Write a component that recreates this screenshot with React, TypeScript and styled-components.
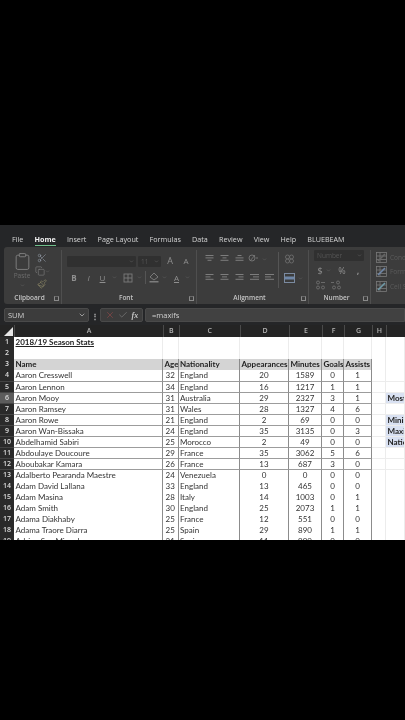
import React from "react";
import styled, { createGlobalStyle } from "styled-components";
import { ChevronDown, Check, X, Scissors, Copy, Paintbrush, Clipboard } from "lucide-react";

const GlobalStyle = createGlobalStyle`
	html, body { margin: 0; padding: 0; background: #000; }
	* { box-sizing: border-box; }
`;

const COLUMNS = "14px 149px 15.5px 61.5px 49px 33px 22px 28px 14px 1fr";
const ROW_HEIGHT = 11.07;
const UI_FONT = `"Open Sans", "Noto Sans", sans-serif`;
const CELL_FONT = `Lato, "Open Sans", sans-serif`;

const players: [string, number, string, number, number, number, number][] = [
	["Aaron Cresswell", 32, "England", 20, 1589, 0, 1],
	["Aaron Lennon", 34, "England", 16, 1217, 1, 1],
	["Aaron Mooy", 31, "Australia", 29, 2327, 3, 1],
	["Aaron Ramsey", 31, "Wales", 28, 1327, 4, 6],
	["Aaron Rowe", 21, "England", 2, 69, 0, 0],
	["Aaron Wan-Bissaka", 24, "England", 35, 3135, 0, 3],
	["Abdelhamid Sabiri", 25, "Morocco", 2, 49, 0, 0],
	["Abdoulaye Doucoure", 29, "France", 35, 3062, 5, 6],
	["Aboubakar Kamara", 26, "France", 13, 687, 3, 0],
	["Adalberto Pearanda Maestre", 24, "Venezuela", 0, 0, 0, 0],
	["Adam David Lallana", 33, "England", 13, 465, 0, 0],
	["Adam Masina", 28, "Italy", 14, 1003, 0, 1],
	["Adam Smith", 30, "England", 25, 2073, 1, 1],
	["Adama Diakhaby", 25, "France", 12, 551, 0, 0],
	["Adama Traore Diarra", 25, "Spain", 29, 890, 1, 1],
	["Adrian San Miguel", 31, "Spain", 11, 990, 0, 0],
];

const sideLabels: Record<number, string> = {
	6: "Most Goals",
	8: "Minimum",
	9: "Maximum",
	10: "Nationality",
};

const menuItems = ["File", "Home", "Insert", "Page Layout", "Formulas", "Data", "Review", "View", "Help", "BLUEBEAM"];

const Page = styled.div`
	width: 405px;
	height: 720px;
	background: #000;
	padding-top: 225px;
	overflow: hidden;
`;

const Excel = styled.div`
	height: 315px;
	background: #252628;
	overflow: hidden;
	filter: blur(0.4px);
	display: flex;
	flex-direction: column;
`;

const MenuBar = styled.nav`
	height: 22px;
	flex: none;
	display: flex;
	align-items: center;
	gap: 11.2px;
	padding: 5px 0 0 12px;
	font: 7.2px ${UI_FONT};
	color: #d8d8d8;
`;

const MenuItem = styled.span<{ $active?: boolean }>`
	position: relative;
	font-weight: ${(p) => (p.$active ? 700 : 400)};
	color: ${(p) => (p.$active ? "#f2f2f2" : "#d4d4d4")};
	&::after {
		content: "";
		display: ${(p) => (p.$active ? "block" : "none")};
		position: absolute;
		left: 0;
		right: 0;
		bottom: -2px;
		height: 1px;
		background: #6fbf8a;
	}
`;

const Ribbon = styled.div`
	height: 57px;
	flex: none;
	margin-left: 4px;
	background: #3c3c3c;
	border-radius: 3px 0 0 3px;
	display: flex;
	overflow: hidden;
`;

const Group = styled.section<{ $width: number; $last?: boolean }>`
	width: ${(p) => p.$width}px;
	flex: none;
	position: relative;
	display: flex;
	flex-direction: column;
	border-right: 1px solid ${(p) => (p.$last ? "transparent" : "#4f4f4f")};
	margin-top: 3px;
	padding: 0 3px 0 5px;
`;

const GroupBody = styled.div`
	flex: 1;
	display: flex;
	min-height: 0;
`;

const GroupLabel = styled.div`
	height: 11px;
	flex: none;
	padding-right: 8px;
	text-align: center;
	font: 600 6.5px/10px ${UI_FONT};
	color: #c4c4c4;
`;

const Launcher = styled.span`
	position: absolute;
	right: 2px;
	bottom: 3px;
	width: 5px;
	height: 5px;
	border: 1px solid #8a8a8a;
	border-top-color: #666;
`;

const Stack = styled.div<{ $width?: number; $gap?: number; $top?: number; $start?: boolean }>`
	display: flex;
	flex-direction: column;
	align-items: ${(p) => (p.$start ? "flex-start" : "center")};
	gap: ${(p) => p.$gap ?? 0}px;
	padding-top: ${(p) => p.$top ?? 0}px;
	${(p) => (p.$width ? `width: ${p.$width}px; flex: none;` : "")}
`;

const Row = styled.div<{ $gap?: number }>`
	display: flex;
	align-items: center;
	gap: ${(p) => p.$gap ?? 0}px;
`;

const Spaced = styled.span<{ $left: number }>`
	display: inline-flex;
	align-items: center;
	flex: none;
	margin-left: ${(p) => p.$left}px;
`;

const PasteLabel = styled.span`
	font: 6.5px/8px ${UI_FONT};
	color: #6c6c6c;
	margin: 1px 0 3px;
`;

const Combo = styled.div<{ $width: number }>`
	width: ${(p) => p.$width}px;
	height: 11px;
	flex: none;
	background: #303030;
	border-radius: 1px;
	display: flex;
	align-items: center;
	justify-content: space-between;
	padding: 0 2px 0 3px;
	font: 6.5px ${UI_FONT};
	color: #555;
`;

const Glyph = styled.span<{ $width?: number; $bold?: boolean; $italic?: boolean; $under?: boolean; $size?: number }>`
	display: inline-block;
	width: ${(p) => p.$width ?? 14}px;
	text-align: center;
	flex: none;
	font: ${(p) => (p.$italic ? "italic " : "")}${(p) => (p.$bold ? 700 : 400)} ${(p) => p.$size ?? 8}px/12px ${UI_FONT};
	color: #8f8f8f;
	text-decoration: ${(p) => (p.$under ? "underline" : "none")};
`;

const Caret = styled(ChevronDown).attrs({ size: 5, strokeWidth: 2.5 })`
	color: #666;
	flex: none;
`;

const RuleDivider = styled.span<{ $tall?: boolean }>`
	width: 1px;
	height: ${(p) => (p.$tall ? 36 : 13)}px;
	background: #555;
	flex: none;
`;

const StyleRow = styled.div`
	display: flex;
	align-items: center;
	gap: 3px;
	height: 14.5px;
	font: 6.5px ${UI_FONT};
	color: #5b5b5b;
	white-space: nowrap;
`;

const AlignIcon: React.FC<{ lines: [number, number][] }> = ({ lines }) => (
	<svg width="15" height="10" viewBox="0 0 15 10">
		{lines.map(([x1, x2], i) => (
			<line key={i} x1={x1} x2={x2} y1={1.5 + i * 2.4} y2={1.5 + i * 2.4} stroke="#858585" strokeWidth="0.9" />
		))}
	</svg>
);

const OrientIcon = () => (
	<svg width="15" height="10" viewBox="0 0 15 10" fill="none" stroke="#777" strokeWidth="0.9">
		<circle cx="5" cy="4" r="3" />
		<path d="M3 7 L8 1 M9 4 h2" />
	</svg>
);

const WrapIcon = () => (
	<svg width="11" height="10" viewBox="0 0 11 10" fill="none" stroke="#6d6d6d" strokeWidth="0.9">
		<circle cx="3.5" cy="3" r="2" />
		<circle cx="7.5" cy="3" r="2" />
		<circle cx="3.5" cy="7" r="2" />
		<circle cx="7.5" cy="7" r="2" />
	</svg>
);

const MergeIcon = () => (
	<svg width="11" height="10" viewBox="0 0 11 10" fill="none">
		<rect x="0.5" y="0.5" width="10" height="9" stroke="#7a8aa0" />
		<rect x="1" y="3.5" width="9" height="3" fill="#6f87a8" />
	</svg>
);

const BorderIcon = () => (
	<svg width="10" height="10" viewBox="0 0 10 10" fill="none" stroke="#7a7a7a" strokeWidth="0.9">
		<rect x="1" y="1" width="8" height="8" />
		<path d="M5 1v8M1 5h8" />
	</svg>
);

const FillIcon = () => (
	<svg width="10" height="11" viewBox="0 0 10 11" fill="none" stroke="#808080" strokeWidth="0.9">
		<path d="M5 1 L9 5 L5 8 L1 5 Z" />
		<rect x="0.5" y="9" width="9" height="1.5" fill="#7d7d7d" stroke="none" />
	</svg>
);

const DecimalIcon: React.FC<{ flip?: boolean }> = ({ flip }) => (
	<svg width="12" height="10" viewBox="0 0 12 10" fill="none" stroke="#6f6f6f" strokeWidth="0.9">
		<circle cx={flip ? 8 : 4} cy="2.5" r="1.5" />
		<circle cx="4" cy="7.5" r="1.5" />
		<circle cx="9" cy="7.5" r="1.5" />
		<path d={flip ? "M1 2.5h3" : "M7 2.5h4"} />
	</svg>
);

const TableStyleIcon: React.FC<{ tint: string }> = ({ tint }) => (
	<svg width="11" height="11" viewBox="0 0 11 11" fill="none" stroke="#7a7a7a" strokeWidth="0.8">
		<rect x="0.5" y="0.5" width="10" height="10" />
		<path d="M0.5 4h10M0.5 7.5h10M4 0.5v10" />
		<path d="M2 9 L9 2" stroke={tint} strokeWidth="1.6" />
	</svg>
);

const FormulaBar = styled.div`
	height: 14px;
	flex: none;
	margin-top: 4px;
	display: flex;
	align-items: stretch;
	padding-left: 4px;
	font: 7.5px ${UI_FONT};
	color: #d0d0d0;
`;

const NameBox = styled.div`
	width: 85px;
	flex: none;
	background: #3c3c3c;
	border: 1px solid #4a4a4a;
	border-radius: 2px;
	display: flex;
	align-items: center;
	justify-content: space-between;
	padding: 0 2px 0 3px;
`;

const Dots = styled.span`
	width: 11px;
	flex: none;
	display: flex;
	align-items: center;
	justify-content: center;
	color: #bbb;
	font: 700 8px ${UI_FONT};
`;

const FormulaButtons = styled.div`
	width: 43px;
	flex: none;
	background: #3c3c3c;
	border: 1px solid #4a4a4a;
	border-radius: 2px;
	display: flex;
	align-items: center;
	justify-content: space-around;
	padding: 0 2px;
`;

const FxLabel = styled.span`
	font: italic 700 8px "Liberation Serif", serif;
	color: #c4c4c4;
`;

const FormulaInput = styled.div`
	flex: 1;
	margin-left: 2px;
	background: #414141;
	border: 1px solid #4a4a4a;
	border-radius: 2px 0 0 2px;
	padding-left: 6px;
	line-height: 12px;
	font-size: 7.5px;
`;

const Sheet = styled.div`
	margin-top: 3px;
	flex: 1;
	min-height: 0;
	background: #fff;
	overflow: hidden;
`;

const ColumnHeader = styled.div`
	height: 12.3px;
	display: grid;
	grid-template-columns: ${COLUMNS};
	background: #242424;
`;

const ColumnLetter = styled.div`
	text-align: center;
	font: 600 7px/12px ${UI_FONT};
	color: #b4b4b4;
	border-left: 1px solid #4a4a4a;
`;

const SelectAll = styled.div`
	position: relative;
	&::after {
		content: "";
		position: absolute;
		right: 1px;
		bottom: 1px;
		border-style: solid;
		border-width: 0 0 9px 9px;
		border-color: transparent transparent #e6e6e6 transparent;
	}
`;

const SheetRow = styled.div`
	height: ${ROW_HEIGHT}px;
	display: grid;
	grid-template-columns: ${COLUMNS};
`;

const RowNumber = styled.div<{ $active?: boolean }>`
	background: ${(p) => (p.$active ? "#5c5c5c" : "#2a2a2a")};
	color: #dedede;
	text-align: center;
	font: 600 7px/10.5px ${UI_FONT};
	border-bottom: 1px solid #444;
`;

const Cell = styled.div<{ $align?: string; $head?: boolean; $table?: boolean; $fill?: boolean; $title?: boolean }>`
	min-width: 0;
	white-space: nowrap;
	overflow: ${(p) => (p.$title ? "visible" : "hidden")};
	padding: 0 1.5px;
	text-align: ${(p) => p.$align ?? "left"};
	font: ${(p) => (p.$head || p.$fill || p.$title ? 700 : 400)} 8px/10.6px ${CELL_FONT};
	color: ${(p) => (p.$head || p.$fill || p.$title ? "#222" : "#333")};
	text-decoration: ${(p) => (p.$title ? "underline" : "none")};
	background: ${(p) => (p.$head ? "#d4d4d4" : p.$fill ? "#d9e1f2" : "#fff")};
	border-bottom: 1px solid ${(p) => (p.$table ? "#9c9c9c" : "#ececec")};
	border-right: 1px solid ${(p) => (p.$table ? "#8c8c8c" : "#ececec")};
`;

const Ribbonbar = () => (
	<Ribbon>
		<Group $width={58}>
			<GroupBody>
				<Stack $width={26} $top={2}>
					<Clipboard size={19} strokeWidth={1.2} color="#808080" />
					<PasteLabel>Paste</PasteLabel>
					<Caret />
				</Stack>
				<Stack $width={14} $gap={3} $top={3}>
					<Scissors size={10} strokeWidth={1.3} color="#9aa3b0" />
					<Row>
						<Copy size={10} strokeWidth={1.3} color="#8a8a8a" />
						<Caret />
					</Row>
					<Paintbrush size={10} strokeWidth={1.3} color="#9a9570" />
				</Stack>
			</GroupBody>
			<GroupLabel>Clipboard</GroupLabel>
			<Launcher />
		</Group>
		<Group $width={135}>
			<GroupBody>
				<Stack $gap={4} $top={5} $start>
					<Row $gap={2}>
						<Combo $width={69}>
							<span />
							<Caret />
						</Combo>
						<Combo $width={23}>
							<span>11</span>
							<Caret />
						</Combo>
						<Glyph $size={9}>A</Glyph>
						<Glyph $size={8}>A</Glyph>
					</Row>
					<Row>
						<Glyph $bold $width={14}>B</Glyph>
						<Glyph $italic $width={15}>I</Glyph>
						<Glyph $under $width={13}>U</Glyph>
						<Spaced $left={3}><Caret /></Spaced>
						<Spaced $left={6}><BorderIcon /></Spaced>
						<Spaced $left={4}><Caret /></Spaced>
						<Spaced $left={3}><RuleDivider /></Spaced>
						<Spaced $left={3}><FillIcon /></Spaced>
						<Spaced $left={3}><Caret /></Spaced>
						<Glyph $under $width={17} style={{ marginLeft: 1 }}>A</Glyph>
						<Caret />
					</Row>
				</Stack>
			</GroupBody>
			<GroupLabel>Font</GroupLabel>
			<Launcher />
		</Group>
		<Group $width={112}>
			<GroupBody>
				<Stack $gap={7.5} $top={2.5} $start>
					<Row style={{ height: 13 }}>
						<AlignIcon lines={[[3.5, 11.5], [3.5, 11.5], [5.5, 9.5]]} />
						<AlignIcon lines={[[3.5, 11.5], [5.5, 9.5], [3.5, 11.5]]} />
						<AlignIcon lines={[[5.5, 9.5], [3.5, 11.5], [3.5, 11.5]]} />
						<OrientIcon />
						<Caret />
					</Row>
					<Row>
						<AlignIcon lines={[[3.5, 11.5], [3.5, 8.5], [3.5, 11.5]]} />
						<AlignIcon lines={[[3.5, 11.5], [5, 10], [3.5, 11.5]]} />
						<AlignIcon lines={[[3.5, 11.5], [6.5, 11.5], [3.5, 11.5]]} />
						<AlignIcon lines={[[3, 12], [6, 12], [3, 12]]} />
						<AlignIcon lines={[[3, 12], [3, 9], [3, 12]]} />
					</Row>
				</Stack>
				<Spaced $left={1} style={{ alignSelf: "flex-start", marginTop: 2 }}><RuleDivider $tall /></Spaced>
				<Stack $gap={7.5} $top={4} $start style={{ marginLeft: 5 }}>
					<Row style={{ height: 10 }}><WrapIcon /></Row>
					<Row $gap={3} style={{ height: 10, marginTop: 1.5 }}>
						<MergeIcon />
						<Caret />
					</Row>
				</Stack>
			</GroupBody>
			<GroupLabel>Alignment</GroupLabel>
			<Launcher />
		</Group>
		<Group $width={62}>
			<GroupBody>
				<Stack $gap={3.5} $start>
					<Combo $width={50}>
						<span>Number</span>
						<Caret />
					</Combo>
					<Row>
						<Glyph $size={9} $width={12}>$</Glyph>
						<Caret />
						<Glyph $size={9} $width={18} style={{ marginLeft: 2 }}>%</Glyph>
						<Glyph $bold $size={9} $width={14}>,</Glyph>
					</Row>
					<Row $gap={4}>
						<DecimalIcon />
						<DecimalIcon flip />
					</Row>
				</Stack>
			</GroupBody>
			<GroupLabel>Number</GroupLabel>
			<Launcher />
		</Group>
		<Group $width={80} $last>
			<GroupBody>
				<Stack $start>
					<StyleRow><TableStyleIcon tint="#666" />Conditional</StyleRow>
					<StyleRow><TableStyleIcon tint="#6f87a8" />Format as</StyleRow>
					<StyleRow><TableStyleIcon tint="#6f9aa8" />Cell Styles</StyleRow>
				</Stack>
			</GroupBody>
		</Group>
	</Ribbon>
);

const SideCell: React.FC<{ row: number }> = ({ row }) =>
	sideLabels[row] ? <Cell $fill>{sideLabels[row]}</Cell> : <Cell />;

export default function App() {
	return (
		<Page>
			<GlobalStyle />
			<Excel>
				<MenuBar>
					{menuItems.map((item) => (
						<MenuItem key={item} $active={item === "Home"}>
							{item}
						</MenuItem>
					))}
				</MenuBar>
				<Ribbonbar />
				<FormulaBar>
					<NameBox>
						SUM
						<ChevronDown size={8} color="#c8c8c8" />
					</NameBox>
					<Dots>⋮</Dots>
					<FormulaButtons>
						<X size={10} strokeWidth={1.3} color="#a04a4a" />
						<Check size={10} strokeWidth={1.3} color="#8f8f8f" />
						<FxLabel>fx</FxLabel>
					</FormulaButtons>
					<FormulaInput>=maxifs</FormulaInput>
				</FormulaBar>
				<Sheet>
					<ColumnHeader>
						<SelectAll />
						{["A", "B", "C", "D", "E", "F", "G", "H", ""].map((letter, i) => (
							<ColumnLetter key={i}>{letter}</ColumnLetter>
						))}
					</ColumnHeader>
					<SheetRow>
						<RowNumber>1</RowNumber>
						<Cell $title>2018/19 Season Stats</Cell>
						{Array.from({ length: 8 }).map((_, i) => (
							<Cell key={i} />
						))}
					</SheetRow>
					<SheetRow>
						<RowNumber>2</RowNumber>
						{Array.from({ length: 9 }).map((_, i) => (
							<Cell key={i} />
						))}
					</SheetRow>
					<SheetRow>
						<RowNumber>3</RowNumber>
						<Cell $head $table>Name</Cell>
						<Cell $head $table $align="center">Age</Cell>
						<Cell $head $table>Nationality</Cell>
						<Cell $head $table $align="center">Appearances</Cell>
						<Cell $head $table $align="center">Minutes</Cell>
						<Cell $head $table $align="center">Goals</Cell>
						<Cell $head $table $align="center">Assists</Cell>
						<Cell />
						<Cell />
					</SheetRow>
					{players.map((p, i) => {
						const row = i + 4;
						return (
							<SheetRow key={p[0]}>
								<RowNumber $active={row === 6}>{row}</RowNumber>
								<Cell $table>{p[0]}</Cell>
								<Cell $table $align="center">{p[1]}</Cell>
								<Cell $table>{p[2]}</Cell>
								<Cell $table $align="center">{p[3]}</Cell>
								<Cell $table $align="center">{p[4]}</Cell>
								<Cell $table $align="center">{p[5]}</Cell>
								<Cell $table $align="center">{p[6]}</Cell>
								<Cell />
								<SideCell row={row} />
							</SheetRow>
						);
					})}
				</Sheet>
			</Excel>
		</Page>
	);
}
